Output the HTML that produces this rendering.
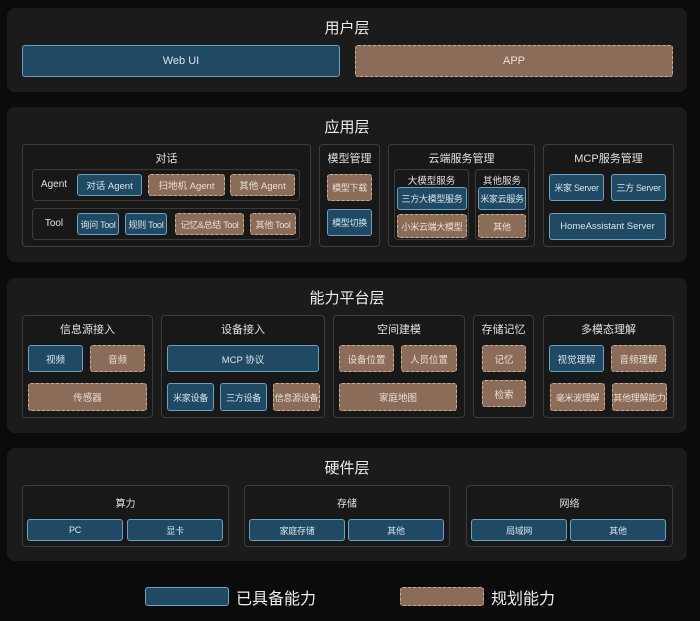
<!DOCTYPE html><html><head><meta charset="utf-8"><style>
*{margin:0;padding:0;box-sizing:border-box}
body{width:700px;height:621px;background:#0b0b0b;position:relative;overflow:hidden;font-family:"Liberation Sans","Noto Sans CJK SC",sans-serif;color:#e6e6e6}
div{position:absolute}
.L{background:#1b1b1b;border-radius:8px}
.T{font-size:15px;text-align:center;color:#ececec}
.G{border:1px solid #3c3c3c;border-radius:4px;background:#181818}
.g{font-size:11px;text-align:center;color:#e0e0e0}
.b,.p{display:flex;align-items:center;justify-content:center;font-size:9.5px;border-radius:3px;white-space:nowrap;color:#d8e2ea;overflow:hidden}
.b{background:#204a64;border:1px solid #6d9fbf}
.p{background:#8a6c58;border:1px dashed #c9ad97;color:#eadfd6}
.s{font-size:9px;letter-spacing:-0.3px}
</style></head><body>
<div class="L" style="left:7px;top:8px;width:680px;height:84px"></div>
<div class="T" style="left:7px;top:17px;width:680px">用户层</div>
<div class="b" style="left:22px;top:45px;width:318px;height:32px;font-size:11px">Web UI</div>
<div class="p" style="left:355px;top:45px;width:318px;height:32px;font-size:11px">APP</div>

<div class="L" style="left:7px;top:107px;width:680px;height:155px"></div>
<div class="T" style="left:7px;top:116px;width:680px">应用层</div>
<div class="G" style="left:22px;top:144px;width:289px;height:103px"></div>
<div class="g" style="left:22px;top:150px;width:289px">对话</div>
<div class="G" style="left:32px;top:169px;width:268px;height:32px"></div>
<div class="G" style="left:32px;top:208px;width:268px;height:32px"></div>
<div class="g" style="left:36px;top:179px;width:36px;font-size:10px">Agent</div>
<div class="g" style="left:36px;top:218px;width:36px;font-size:10px">Tool</div>
<div class="b" style="left:77px;top:174px;width:65px;height:22px">对话 Agent</div>
<div class="p" style="left:148px;top:174px;width:77px;height:22px">扫地机 Agent</div>
<div class="p" style="left:230px;top:174px;width:65px;height:22px">其他 Agent</div>
<div class="b s" style="left:77px;top:213px;width:42px;height:22px">询问 Tool</div>
<div class="b s" style="left:125px;top:213px;width:42px;height:22px">规则 Tool</div>
<div class="p s" style="left:175px;top:213px;width:69px;height:22px">记忆&amp;总结 Tool</div>
<div class="p s" style="left:250px;top:213px;width:46px;height:22px">其他 Tool</div>

<div class="G" style="left:319px;top:144px;width:61px;height:103px"></div>
<div class="g" style="left:319px;top:150px;width:61px">模型管理</div>
<div class="p s" style="left:327px;top:174px;width:45px;height:27px">模型下载</div>
<div class="b s" style="left:327px;top:209px;width:45px;height:27px">模型切换</div>

<div class="G" style="left:388px;top:144px;width:147px;height:103px"></div>
<div class="g" style="left:388px;top:150px;width:147px">云端服务管理</div>
<div class="G" style="left:394px;top:169px;width:75px;height:71px"></div>
<div class="g" style="left:394px;top:173px;width:75px;font-size:9.5px">大模型服务</div>
<div class="G" style="left:475px;top:169px;width:54px;height:71px"></div>
<div class="g" style="left:475px;top:173px;width:54px;font-size:9.5px">其他服务</div>
<div class="b s" style="left:397px;top:187px;width:70px;height:23px">三方大模型服务</div>
<div class="p s" style="left:397px;top:214px;width:70px;height:24px">小米云端大模型</div>
<div class="b s" style="left:478px;top:187px;width:48px;height:23px">米家云服务</div>
<div class="p s" style="left:478px;top:214px;width:48px;height:24px">其他</div>

<div class="G" style="left:543px;top:144px;width:131px;height:103px"></div>
<div class="g" style="left:543px;top:150px;width:131px">MCP服务管理</div>
<div class="b s" style="left:549px;top:174px;width:55px;height:27px">米家 Server</div>
<div class="b s" style="left:611px;top:174px;width:55px;height:27px">三方 Server</div>
<div class="b" style="left:549px;top:213px;width:117px;height:27px">HomeAssistant Server</div>

<div class="L" style="left:7px;top:278px;width:680px;height:155px"></div>
<div class="T" style="left:7px;top:287px;width:680px">能力平台层</div>
<div class="G" style="left:22px;top:315px;width:131px;height:103px"></div>
<div class="g" style="left:22px;top:321px;width:131px">信息源接入</div>
<div class="b" style="left:28px;top:345px;width:55px;height:27px">视频</div>
<div class="p" style="left:90px;top:345px;width:55px;height:27px">音频</div>
<div class="p" style="left:28px;top:383px;width:119px;height:28px">传感器</div>

<div class="G" style="left:161px;top:315px;width:164px;height:103px"></div>
<div class="g" style="left:161px;top:321px;width:164px">设备接入</div>
<div class="b" style="left:167px;top:345px;width:152px;height:27px">MCP 协议</div>
<div class="b s" style="left:167px;top:383px;width:47px;height:28px">米家设备</div>
<div class="b s" style="left:220px;top:383px;width:47px;height:28px">三方设备</div>
<div class="p s" style="left:273px;top:383px;width:47px;height:28px">信息源设备</div>

<div class="G" style="left:333px;top:315px;width:132px;height:103px"></div>
<div class="g" style="left:333px;top:321px;width:132px">空间建模</div>
<div class="p" style="left:339px;top:345px;width:55px;height:27px">设备位置</div>
<div class="p" style="left:401px;top:345px;width:56px;height:27px">人员位置</div>
<div class="p" style="left:339px;top:383px;width:118px;height:28px">家庭地图</div>

<div class="G" style="left:473px;top:315px;width:61px;height:103px"></div>
<div class="g" style="left:473px;top:321px;width:61px">存储记忆</div>
<div class="p" style="left:482px;top:345px;width:44px;height:27px">记忆</div>
<div class="p" style="left:482px;top:380px;width:44px;height:27px">检索</div>

<div class="G" style="left:543px;top:315px;width:131px;height:103px"></div>
<div class="g" style="left:543px;top:321px;width:131px">多模态理解</div>
<div class="b" style="left:549px;top:345px;width:55px;height:27px">视觉理解</div>
<div class="p" style="left:611px;top:345px;width:55px;height:27px">音频理解</div>
<div class="p s" style="left:550px;top:383px;width:55px;height:28px">毫米波理解</div>
<div class="p s" style="left:612px;top:383px;width:55px;height:28px">其他理解能力</div>

<div class="L" style="left:7px;top:448px;width:680px;height:113px"></div>
<div class="T" style="left:7px;top:457px;width:680px">硬件层</div>
<div class="G" style="left:22px;top:485px;width:207px;height:62px"></div>
<div class="g" style="left:22px;top:495px;width:207px;font-size:10px">算力</div>
<div class="b s" style="left:27px;top:519px;width:96px;height:22px">PC</div>
<div class="b s" style="left:127px;top:519px;width:96px;height:22px">显卡</div>
<div class="G" style="left:244px;top:485px;width:206px;height:62px"></div>
<div class="g" style="left:244px;top:495px;width:206px;font-size:10px">存储</div>
<div class="b s" style="left:249px;top:519px;width:96px;height:22px">家庭存储</div>
<div class="b s" style="left:348px;top:519px;width:96px;height:22px">其他</div>
<div class="G" style="left:466px;top:485px;width:207px;height:62px"></div>
<div class="g" style="left:466px;top:495px;width:207px;font-size:10px">网络</div>
<div class="b s" style="left:471px;top:519px;width:96px;height:22px">局域网</div>
<div class="b s" style="left:570px;top:519px;width:96px;height:22px">其他</div>

<div class="b" style="left:145px;top:587px;width:84px;height:19px"></div>
<div style="left:236px;top:585px;font-size:16px;color:#eee">已具备能力</div>
<div class="p" style="left:400px;top:587px;width:84px;height:19px"></div>
<div style="left:491px;top:585px;font-size:16px;color:#eee">规划能力</div>
</body></html>
